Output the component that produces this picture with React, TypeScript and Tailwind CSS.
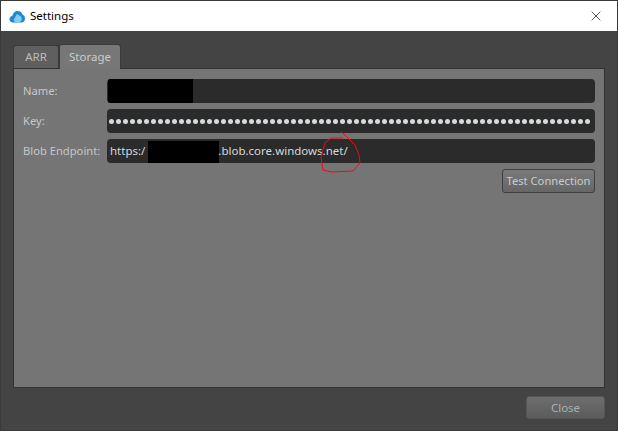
import { X } from "lucide-react";

const font = { fontFamily: '"Noto Sans", sans-serif' };

function CloudLogo() {
  return (
    <svg width="16" height="13" viewBox="0 0 16 13">
      <path d="M4 12.5C1.800 12.500.5 11 .5 9.200.5 7.500 1.700 6.200 3.300 6 3.800 3 6 1 8.700 1c2.400 0 4.300 1.500 4.900 3.800 1.400.4 2.400 1.800 2.400 3.600 0 2.400-1.700 4.100-3.900 4.100z" fill="#1e88d8" />
      <path d="M4.500 10 8 4l4 2.500 1 3-2 2.500H6z" fill="#86cdf0" />
    </svg>
  );
}

function Field({ label, children }: { label: string; children: React.ReactNode }) {
  return (
    <div className="flex items-center h-6">
      <div className="w-[93px] pl-[9px] shrink-0 text-[11.200px] text-[#c4c8c8] whitespace-nowrap">{label}</div>
      <div className="relative flex-1 h-6 mr-[9px] rounded-[4px] bg-[#2b2b2b] flex items-center overflow-hidden text-[11.500px] text-[#d4d8d8] whitespace-nowrap">
        {children}
      </div>
    </div>
  );
}

export default function App() {
  return (
    <div className="w-[618px] h-[431px] flex flex-col bg-[#444444] border border-[#3a3a3a] overflow-hidden relative" style={font}>
      {/* title bar */}
      <div className="h-[30px] bg-white flex items-center pl-2 pr-[13px] shrink-0">
        <CloudLogo />
        <span className="ml-[5px] text-[11.500px] text-black">Settings</span>
        <X className="ml-auto text-black" size={16} strokeWidth={1} />
      </div>

      <div className="flex-1 flex flex-col pl-3 pr-3">
        {/* tabs */}
        <div className="flex items-end h-[37px] shrink-0">
          <div className="w-[46px] h-[23px] bg-[#5f5f5f] border border-b-0 border-[#3a3a3a] rounded-t-[3px] flex items-center justify-center text-[11.500px] text-[#b8bcbc]">
            ARR
          </div>
          <div className="w-[62px] h-[25px] -mb-px z-10 bg-[#777777] border border-b-0 border-[#3a3a3a] rounded-t-[3px] flex items-center justify-center text-[11.500px] text-[#c8cccc]">
            Storage
          </div>
        </div>

        {/* panel */}
        <div className="h-[320px] bg-[#757575] border border-[#333333] pt-[10px] flex flex-col gap-[6px]">
          <Field label="Name:">
            <div className="w-[85px] h-6 ml-px bg-black" />
          </Field>
          <Field label="Key:">
            <div className="pl-[2px] flex gap-[2px]">
              {Array.from({ length: 69 }).map((_, i) => (
                <span key={i} className="w-[5px] h-[5px] rounded-full bg-[#d4dcdf] shrink-0" />
              ))}
            </div>
          </Field>
          <Field label="Blob Endpoint:">
            <span className="pl-[3px]">https:/</span>
            <div className="w-[71px] h-6 mt-1 bg-black shrink-0 ml-[3px]" />
            <span className="-ml-px">.blob.core.windows.net/</span>
          </Field>
          <div className="flex justify-end pr-[9px]">
            <button className="w-[93px] h-6 rounded-[3px] border border-[#3f3f3f] bg-gradient-to-b from-[#7a7a7a] to-[#666666] text-[11.200px] text-[#c8cccc]">
              Test Connection
            </button>
          </div>
        </div>

        {/* footer */}
        <div className="flex justify-end pt-[8px]">
          <button className="w-[79px] h-[23px] rounded-[3px] border border-[#555555] bg-gradient-to-b from-[#6e6e6e] to-[#5c5c5c] text-[11.500px] text-[#a8b0b4]">
            Close
          </button>
        </div>
      </div>

      {/* red scribble drawn over the screenshot */}
      <svg className="absolute left-[-1px] top-[-1px] pointer-events-none" width="618" height="431" fill="none">
        <path
          d="M341 132 345 135 349 139 355 145 359 155 360 163 353 171 332 172 323 170 321 157 325 143 331 138 343 138"
          stroke="#e8101a"
          strokeWidth="1"
        />
      </svg>
    </div>
  );
}
